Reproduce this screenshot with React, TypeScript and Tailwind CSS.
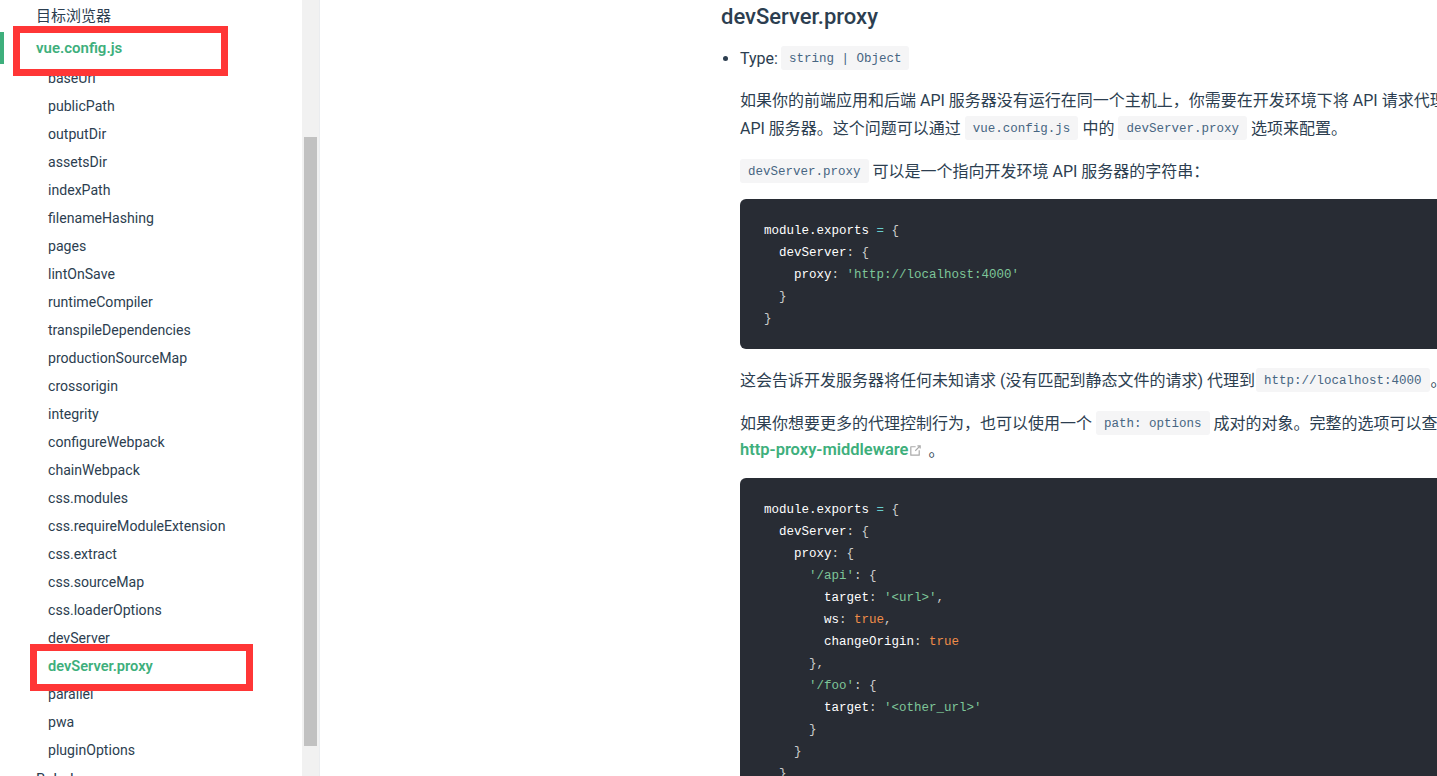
import React from "react";

const items = ["baseUrl","publicPath","outputDir","assetsDir","indexPath","filenameHashing","pages","lintOnSave","runtimeCompiler","transpileDependencies","productionSourceMap","crossorigin","integrity","configureWebpack","chainWebpack","css.modules","css.requireModuleExtension","css.extract","css.sourceMap","css.loaderOptions","devServer","devServer.proxy","parallel","pwa","pluginOptions"];

const C = ({ children }: { children: React.ReactNode }) => (
  <code className="mb-[2px] inline-block h-[24px] rounded-[3px] bg-[#f5f5f6] px-2 align-middle font-['Liberation_Mono',monospace] text-[12.5px] leading-[26px] text-[#476582]">{children}</code>
);
const K = ({ children }: { children: React.ReactNode }) => <span className="text-white">{children}</span>;
const P = ({ children }: { children: React.ReactNode }) => <span className="text-[#cccccc]">{children}</span>;
const S = ({ children }: { children: React.ReactNode }) => <span className="text-[#7ec699]">{children}</span>;
const B = ({ children }: { children: React.ReactNode }) => <span className="text-[#f08d49]">{children}</span>;
const Pre = ({ children, cls }: { children: React.ReactNode; cls: string }) => (
  <pre className={"w-[760px] overflow-hidden bg-[#282c34] px-6 pt-[21px] pb-[19px] font-['Liberation_Mono',monospace] text-[12.5px] leading-[22px] " + cls}>{children}</pre>
);

export default function App() {
  return (
    <div className="relative flex h-[776px] w-[1437px] overflow-hidden bg-white font-['Roboto','Noto_Sans_CJK_SC',sans-serif] text-[#2c3e50]">
      <aside className="flex h-full w-[320px] shrink-0 border-r border-[#eaecef]">
        <nav className="w-[302px] shrink-0 pt-[2px] text-[14.1px] text-[#2c3e50]">
          <div className="flex h-7 items-center pl-9 text-[15px]">目标浏览器</div>
          <div className="mt-[2px] flex h-8 items-center border-l-4 border-[#3eaf7c] pl-8 text-[15px] font-semibold text-[#3eaf7c]">vue.config.js</div>
          {items.map((t) => (
            <div key={t} className={"flex h-7 items-center pt-[2px] pl-12 " + (t === "devServer.proxy" ? "text-[14.6px] font-semibold text-[#3eaf7c]" : "")}>{t}</div>
          ))}
          <div className="flex h-7 items-center pt-[2px] pl-9 text-[15px]">Babel</div>
        </nav>
        <div className="w-[17px] shrink-0 bg-[#f1f1f1] pt-[137px] pl-[2px]">
          <div className="h-[609px] w-[13px] bg-[#c1c1c1]" />
        </div>
      </aside>

      <main className="min-w-0 flex-1 pl-[401px] text-[16px]">
        <h2 className="flex h-[32px] items-center text-[22px] font-medium whitespace-nowrap">devServer.proxy</h2>
        <div className="pl-[19px]">
          <div className="relative mt-[12px] flex h-7 items-center gap-[3px] pt-[2px] whitespace-nowrap">
            <span className="absolute left-[-17px] top-[12px] h-[5px] w-[5px] rounded-full bg-[#2c3e50]" />
            Type: <C>string | Object</C>
          </div>
          <p className="mt-[14px] flex h-7 items-center pt-[2px] whitespace-nowrap">如果你的前端应用和后端 API 服务器没有运行在同一个主机上，你需要在开发环境下将 API 请求代理到</p>
          <p className="flex h-7 items-center gap-[4px] pt-[2px] whitespace-nowrap">API 服务器。这个问题可以通过 <C>vue.config.js</C> 中的 <C>devServer.proxy</C> 选项来配置。</p>
          <p className="mt-[15px] flex h-7 items-center gap-[4px] pt-[2px] whitespace-nowrap"><C>devServer.proxy</C> 可以是一个指向开发环境 API 服务器的字符串：</p>
          <Pre cls="mt-[14px] rounded-l-md">
            <K>module.exports</K> <span className="text-[#67cdcc]">=</span> <P>{"{"}</P>{"\n"}
            {"  "}<K>devServer</K><P>: {"{"}</P>{"\n"}
            {"    "}<K>proxy</K><P>:</P> <S>'http://localhost:4000'</S>{"\n"}
            {"  "}<P>{"}"}</P>{"\n"}
            <P>{"}"}</P>
          </Pre>
          <p className="mt-[17px] flex h-7 items-center gap-[1px] pt-[2px] whitespace-nowrap">这会告诉开发服务器将任何未知请求 (没有匹配到静态文件的请求) 代理到 <C>http://localhost:4000</C> 。</p>
          <p className="mt-[15px] flex h-7 items-center gap-[4px] pt-[2px] whitespace-nowrap">如果你想要更多的代理控制行为，也可以使用一个 <C>path: options</C> 成对的对象。完整的选项可以查阅</p>
          <p className="flex h-[27px] items-center whitespace-nowrap">
            <a className="text-[16.5px] font-semibold text-[#3eaf7c]">http-proxy-middleware</a>
            <svg viewBox="0 0 100 100" className="h-[15px] w-[15px]" fill="#aaaaaa">
              <path d="M18.8,85.1h56l0,0c2.2,0,4-1.8,4-4v-32h-8v28h-48v-48h28v-8h-32l0,0c-2.2,0-4,1.8-4,4v56C14.8,83.3,16.6,85.1,18.8,85.1z" />
              <polygon points="45.7,48.7 51.3,54.3 77.2,28.5 77.2,37.2 85.2,37.2 85.2,14.9 62.8,14.9 62.8,22.9 71.5,22.9" />
            </svg>
            <span className="ml-[5px]">。</span>
          </p>
          <Pre cls="mt-[14px] rounded-l-md">
            <K>module.exports</K> <span className="text-[#67cdcc]">=</span> <P>{"{"}</P>{"\n"}
            {"  "}<K>devServer</K><P>: {"{"}</P>{"\n"}
            {"    "}<K>proxy</K><P>: {"{"}</P>{"\n"}
            {"      "}<S>'/api'</S><P>: {"{"}</P>{"\n"}
            {"        "}<K>target</K><P>:</P> <S>'&lt;url&gt;'</S><P>,</P>{"\n"}
            {"        "}<K>ws</K><P>:</P> <B>true</B><P>,</P>{"\n"}
            {"        "}<K>changeOrigin</K><P>:</P> <B>true</B>{"\n"}
            {"      "}<P>{"},"}</P>{"\n"}
            {"      "}<S>'/foo'</S><P>: {"{"}</P>{"\n"}
            {"        "}<K>target</K><P>:</P> <S>'&lt;other_url&gt;'</S>{"\n"}
            {"      "}<P>{"}"}</P>{"\n"}
            {"    "}<P>{"}"}</P>{"\n"}
            {"  "}<P>{"}"}</P>{"\n"}
            <P>{"}"}</P>
          </Pre>
        </div>
      </main>

      <div className="pointer-events-none absolute left-[13px] top-[26px] h-[50px] w-[215px] border-[7px] border-[#ff3636]" />
      <div className="pointer-events-none absolute left-[30px] top-[644px] h-[47px] w-[223px] border-[7px] border-[#ff3636]" />
    </div>
  );
}
